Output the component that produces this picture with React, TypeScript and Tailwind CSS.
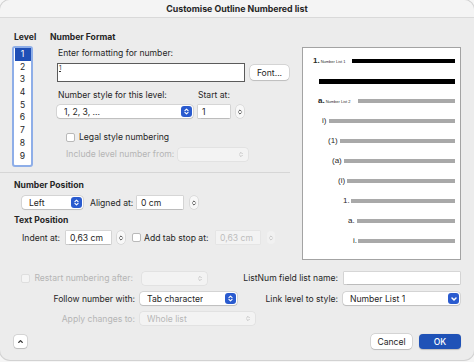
import clsx from 'clsx'

// Small up/down chevron pair used by pop-up buttons and steppers.
function UpDown({ className = '' }: { className?: string }) {
  return (
    <svg viewBox="0 0 8 10" className={className} fill="none" stroke="currentColor" strokeWidth={1.3} strokeLinecap="round" strokeLinejoin="round">
      <path d="M2.2 4 L4 2.2 L5.8 4" />
      <path d="M2.2 6 L4 7.8 L5.8 6" />
    </svg>
  )
}

function ChevronDown({ className = '' }: { className?: string }) {
  return (
    <svg viewBox="0 0 8 8" className={className} fill="none" stroke="currentColor" strokeWidth={1.5} strokeLinecap="round" strokeLinejoin="round">
      <path d="M2 3 L4 5 L6 3" />
    </svg>
  )
}

const field = 'bg-white shadow-[0_0_0_0.5px_rgba(0,0,0,0.18),0_0.5px_1px_rgba(0,0,0,0.12)]'

function Select({ className, value, kind = 'updown', disabled }: { className: string; value?: string; kind?: 'updown' | 'down'; disabled?: boolean }) {
  return (
    <div
      className={clsx(
        'flex h-[13px] shrink-0 items-center rounded-[3px] pr-[1px] pl-[7px]',
        disabled ? 'bg-[#f3f3f3] text-[#b7b7b7] shadow-[0_0_0_0.5px_rgba(0,0,0,0.08)]' : field,
        className,
      )}
    >
      <span className="truncate">{value}</span>
      {disabled ? (
        <UpDown className="mr-[3px] ml-auto h-[9px] w-[6px] text-[#c2c2c2]" />
      ) : (
        <span className="ml-auto flex h-[11px] w-[11px] items-center justify-center rounded-[3px] bg-[#2a5bcf] text-white">
          {kind === 'down' ? <ChevronDown className="h-[8px] w-[8px]" /> : <UpDown className="h-[9px] w-[7px]" />}
        </span>
      )}
    </div>
  )
}

function NumInput({ className, value, disabled }: { className: string; value: string; disabled?: boolean }) {
  return (
    <div
      className={clsx(
        'flex h-[13px] shrink-0 items-center pl-[4px]',
        disabled ? 'bg-[#f3f3f3] text-[#bdbdbd] shadow-[0_0_0_0.5px_rgba(0,0,0,0.06)]' : field,
        className,
      )}
    >
      {value}
    </div>
  )
}

function Stepper({ disabled }: { disabled?: boolean }) {
  return (
    <span
      className={clsx(
        'flex h-[13px] w-[8px] shrink-0 items-center justify-center rounded-[4px]',
        disabled ? 'bg-[#f1f1f1] text-[#c6c6c6]' : 'bg-[#f8f8f8] text-[#555] shadow-[0_0_0_0.5px_rgba(0,0,0,0.15)]',
      )}
    >
      <UpDown className="h-[10px] w-[6px]" />
    </span>
  )
}

function Check({ disabled }: { disabled?: boolean }) {
  return (
    <span
      className={clsx(
        'block h-[9px] w-[9px] shrink-0 rounded-[2px] border',
        disabled ? 'border-[#dedede] bg-[#f4f4f4]' : 'border-[#b9b9b9] bg-white',
      )}
    />
  )
}

// Preview rows: x of the number, x where the rule starts, label, rule colour.
const PREVIEW = [
  { x: 313, bar: 352, num: '1.', sub: 'Number List 1', black: true },
  { x: 319, bar: 319, num: '', black: true, thick: true },
  { x: 318, bar: 358, num: 'a.', sub: 'Number List 2' },
  { x: 322, bar: 329, num: 'i)' },
  { x: 328, bar: 340, num: '(1)' },
  { x: 332, bar: 344, num: '(a)' },
  { x: 338, bar: 347, num: '(i)' },
  { x: 343, bar: 351, num: '1.' },
  { x: 348, bar: 357, num: 'a.' },
  { x: 353, bar: 358, num: 'i.' },
]

function Preview() {
  return (
    <div className="mt-[29px] h-[213px] w-[159px] shrink-0 border border-[#a3a3a3] bg-white pt-[3px] pr-[5px] font-['Liberation_Sans',sans-serif]">
      {PREVIEW.map((r, i) => (
        <div key={i} className="flex h-[20px] items-center">
          <span className="shrink-0" style={{ width: r.x - 303 }} />
          <span
            className="-mt-[2px] flex shrink-0 items-end text-[8px] leading-[9px] text-[#2a2a2a]"
            style={{ width: r.bar - r.x }}
          >
            <span className={r.sub ? 'font-bold' : ''}>{r.num}</span>
            {r.sub && <span className="mb-[1px] ml-[1px] text-[4px] leading-[5px] font-normal">{r.sub}</span>}
          </span>
          <span className={clsx('flex-1', r.black ? 'bg-black' : 'bg-[#a9a9a9]', r.thick ? 'h-[5px]' : 'h-[4px]')} />
        </div>
      ))}
    </div>
  )
}

export default function App() {
  const levels = [1, 2, 3, 4, 5, 6, 7, 8, 9]
  return (
    <div className="h-[362px] w-[474px] overflow-hidden bg-[#f6f6f6] font-['Inter',sans-serif] text-[8.6px] leading-[12px] whitespace-nowrap text-[#262626]">
      <div className="h-[360px] rounded-[10px] bg-[#ececec] shadow-[0_0_0_1px_#d2d2d2]">
        <div className="h-[18px] rounded-t-[10px] border-b border-[#d9d9d9] bg-[#f4f4f4] text-center text-[8.8px] leading-[17px] font-bold">
          Customise Outline Numbered list
        </div>

        <div className="flex">
          <div className="w-[302px] shrink-0">
            <div className="flex pt-[13px]">
              <div className="w-[50px] shrink-0 pl-[12px]">
                <div className="pl-[2px] font-bold">Level</div>
                <div className="mt-[3px] h-[121px] w-[21px] rounded-[3px] border-2 border-[#8eaee8] bg-white">
                  {levels.map((n) => (
                    <div
                      key={n}
                      className={clsx(
                        'mx-[0.5px] h-[12.7px] text-center leading-[12.7px]',
                        n === 1 && 'bg-[#1f4fb6] text-white',
                      )}
                    >
                      {n}
                    </div>
                  ))}
                </div>
              </div>

              <div className="flex-1">
                <div className="font-bold">Number Format</div>
                <div className="mt-[4px] pl-[8px]">Enter formatting for number:</div>
                <div className="mt-[4px] ml-[7px] flex items-center">
                  <div className="h-[19px] w-[188px] border-[1.5px] border-[#5b5b5b] bg-white px-[1px] text-[6px] leading-[7px]">
                    <span className="border-b border-[#333]">1</span>
                  </div>
                  <div className={clsx('ml-[5px] flex h-[15px] w-[39px] items-center justify-center rounded-[4px]', field)}>
                    Font...
                  </div>
                </div>
                <div className="mt-[7px] flex pl-[8px]">
                  <span className="w-[140px]">Number style for this level:</span>
                  <span>Start at:</span>
                </div>
                <div className="mt-[4px] ml-[7px] flex items-center">
                  <Select className="w-[136px]" value="1, 2, 3, ..." />
                  <NumInput className="ml-[5px] w-[32px]" value="1" />
                  <span className="ml-[6px]">
                    <Stepper />
                  </span>
                </div>
                <div className="mt-[13px] ml-[16px] flex h-[12px] items-center gap-[4px]">
                  <Check />
                  <span>Legal style numbering</span>
                </div>
                <div className="mt-[5px] ml-[16px] flex h-[12px] items-center">
                  <span className="w-[112px] text-[#b5b5b5]">Include level number from:</span>
                  <Select className="h-[12px] w-[70px]" disabled />
                </div>
              </div>
            </div>

            <div className="mt-[5px] h-px w-[290px] bg-[#d6d6d6]" />

            <div className="mt-[6px] pl-[14px] font-bold">Number Position</div>
            <div className="mt-[5px] flex h-[13px] items-center pl-[22px]">
              <Select className="w-[61px]" value="Left" />
              <span className="ml-[7px] w-[47px]">Aligned at:</span>
              <NumInput className="w-[46px]" value="0 cm" />
              <span className="ml-[7px]">
                <Stepper />
              </span>
            </div>

            <div className="mt-[5px] pl-[14px] font-bold">Text Position</div>
            <div className="mt-[5px] flex h-[13px] items-center pl-[22px]">
              <span className="w-[44px]">Indent at:</span>
              <NumInput className="w-[45px]" value="0,63 cm" />
              <span className="ml-[6px]">
                <Stepper />
              </span>
              <span className="ml-[7px]">
                <Check />
              </span>
              <span className="ml-[3px] w-[72px]">Add tab stop at:</span>
              <NumInput className="w-[44px]" value="0,63 cm" disabled />
              <span className="ml-[7px]">
                <Stepper disabled />
              </span>
            </div>
          </div>

          <Preview />
        </div>

        <div className="mt-[12px]">
          <div className="flex h-[12px] items-center">
            <div className="flex w-[240px] shrink-0 items-center">
              <div className="flex w-[135px] items-center justify-end gap-[4px] pr-[2px] text-[#b5b5b5]">
                <Check disabled />
                <span>Restart numbering after:</span>
              </div>
              <Select className="ml-[7px] h-[12px] w-[65px]" disabled />
            </div>
            <span className="w-[98px] shrink-0 text-right">ListNum field list name:</span>
            <div className={clsx('ml-[6px] h-[12px] w-[116px]', field)} />
          </div>

          <div className="mt-[8px] flex h-[13px] items-center">
            <div className="flex w-[240px] shrink-0 items-center">
              <span className="w-[135px] text-right">Follow number with:</span>
              <Select className="ml-[5px] w-[97px]" value="Tab character" />
            </div>
            <span className="w-[98px] shrink-0 text-right">Link level to style:</span>
            <Select className="ml-[5px] w-[117px]" value="Number List 1" kind="down" />
          </div>

          <div className="mt-[7px] flex h-[13px] items-center">
            <span className="w-[135px] text-right text-[#b5b5b5]">Apply changes to:</span>
            <Select className="ml-[5px] w-[115px]" value="Whole list" disabled />
          </div>

          <div className="mt-[9px] flex h-[15px] items-center pr-[13px] pl-[14px]">
            <div className={clsx('flex h-[13px] w-[13px] items-center justify-center rounded-[3px]', field)}>
              <svg viewBox="0 0 8 8" className="h-[7px] w-[7px]" fill="none" stroke="#333" strokeWidth={1.6} strokeLinecap="round" strokeLinejoin="round">
                <path d="M2 5 L4 3 L6 5" />
              </svg>
            </div>
            <div className={clsx('ml-auto flex h-[15px] w-[41px] items-center justify-center rounded-[4px]', field)}>
              Cancel
            </div>
            <div className="ml-[7px] flex h-[15px] w-[42px] items-center justify-center rounded-[4px] bg-[#1f52b7] font-medium text-white shadow-[0_0.5px_1px_rgba(0,0,0,0.2)]">
              OK
            </div>
          </div>
        </div>
      </div>
    </div>
  )
}
